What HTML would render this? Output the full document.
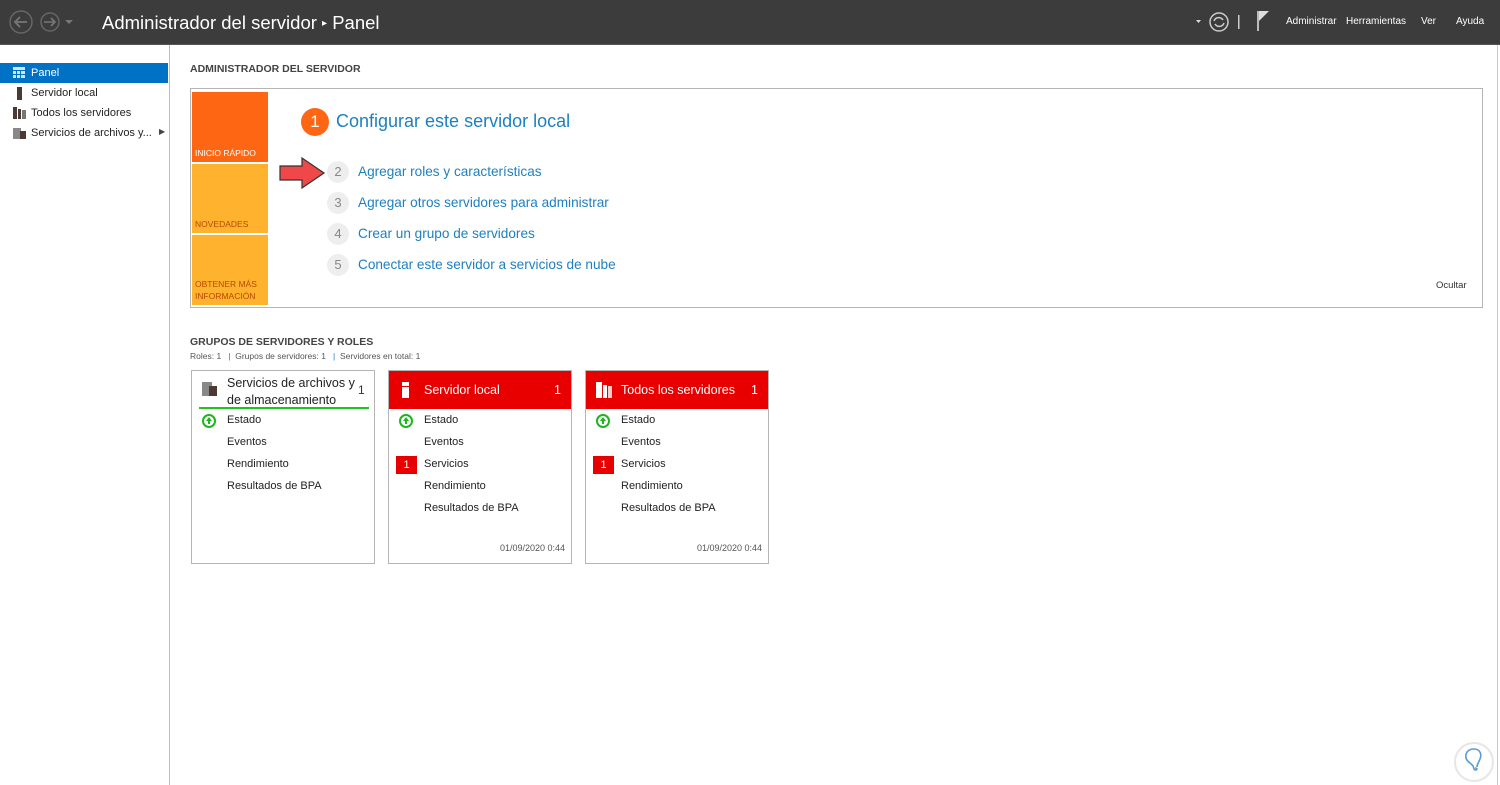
<!DOCTYPE html>
<html><head><meta charset="utf-8"><style>
*{margin:0;padding:0;box-sizing:border-box}
body{width:1500px;height:785px;overflow:hidden;background:#fff;font-family:"Segoe UI","Liberation Sans",sans-serif;position:relative;color:#333}
.abs{position:absolute}
#hdr{left:0;top:0;width:1500px;height:45px;background:#3c3c3c;border-bottom:1px solid #555}
#side{left:0;top:45px;width:170px;height:740px;border-right:1px solid #bdbdbd;background:#fff}
.nav{position:absolute;left:0;width:168px;height:20px;font-size:11px;line-height:20px;padding-left:31px;color:#222}
.sel{background:#0072c6;color:#fff}
.ico{position:absolute;left:13px;top:4px}
.menu{color:#fff;font-size:10px;top:16px}
.tile{position:absolute;left:192px;width:76px;font-size:8.5px;padding:0 0 3px 3px;display:flex;align-items:flex-end;line-height:12px}
.step{position:absolute;left:327px;font-size:13.6px;color:#1e80c0}
.step span{display:inline-block;width:22px;height:22px;border-radius:50%;background:#eee;color:#888;text-align:center;line-height:22px;margin-right:9px;font-size:13px}
.card{position:absolute;top:370px;width:184px;height:194px;border:1px solid #b5b5b5;background:#fff}
.ch{height:38px;background:#e80000;color:#fff;font-size:12.5px;line-height:38px;padding-left:35px;position:relative}
.row{position:absolute;left:35px;font-size:11px;color:#222}
.badge{position:absolute;left:7px;width:21px;height:18px;background:#e80000;color:#fff;font-size:11px;text-align:center;line-height:18px}
.up{position:absolute;left:10px;width:14px;height:14px;border:2px solid #1fb51f;border-radius:50%}
.up:after{content:"";position:absolute;left:2px;top:1px;border-left:3px solid transparent;border-right:3px solid transparent;border-bottom:4px solid #1fb51f}
.up:before{content:"";position:absolute;left:4px;top:4px;width:2px;height:4px;background:#1fb51f}
.date{position:absolute;right:6px;top:172px;font-size:9px;color:#555}
</style></head><body>
<div id="hdr" class="abs">
 <svg class="abs" style="left:8px;top:8px" width="70" height="28"><circle cx="13" cy="14" r="11" fill="none" stroke="#666" stroke-width="1.5"/><path d="M19 14H7M12 9l-5 5 5 5" stroke="#777" stroke-width="1.8" fill="none"/><circle cx="42" cy="14" r="9" fill="none" stroke="#666" stroke-width="1.5"/><path d="M36 14h11M43 10l4 4-4 4" stroke="#777" stroke-width="1.6" fill="none"/><path d="M57 12h8l-4 4z" fill="#777"/></svg>
 <div class="abs" style="left:102px;top:12px;color:#fff;font-size:18.5px">Administrador del servidor <span style="font-size:10px;vertical-align:3px">▸</span> Panel</div>
 <svg class="abs" style="left:1193px;top:10px" width="80" height="25"><path d="M3 10h5l-2.5 3z" fill="#ddd"/><circle cx="26" cy="12" r="9" fill="none" stroke="#ccc" stroke-width="1.5"/><path d="M21 11a5 5 0 0 1 9-1M31 13a5 5 0 0 1-9 1" stroke="#ccc" stroke-width="1.5" fill="none"/><rect x="45" y="5" width="1.5" height="14" fill="#ccc"/><rect x="64" y="1" width="2" height="20" fill="#bbb"/><path d="M66 1l10 0-10 10z" fill="#ddd"/></svg>
 <div class="abs menu" style="left:1286px">Administrar</div>
 <div class="abs menu" style="left:1346px">Herramientas</div>
 <div class="abs menu" style="left:1421px">Ver</div>
 <div class="abs menu" style="left:1456px">Ayuda</div>
</div>
<div id="side" class="abs">
 <div class="nav sel" style="top:18px"><svg class="ico" width="12" height="11"><g fill="#cfe6f8"><rect x="0" y="0" width="12" height="3"/><rect x="0" y="4" width="3" height="3"/><rect x="4" y="4" width="3" height="3"/><rect x="8" y="4" width="4" height="3"/><rect x="0" y="8" width="3" height="3"/><rect x="4" y="8" width="3" height="3"/><rect x="8" y="8" width="4" height="3"/></g></svg>Panel</div>
 <div class="nav" style="top:38px"><svg class="ico" width="12" height="13"><rect x="4" y="0" width="5" height="13" fill="#4a3a33"/></svg>Servidor local</div>
 <div class="nav" style="top:58px"><svg class="ico" width="13" height="12"><rect x="0" y="0" width="4" height="12" fill="#4a3a33"/><rect x="5" y="2" width="3" height="10" fill="#4a3a33"/><rect x="9" y="3" width="4" height="9" fill="#777"/></svg>Todos los servidores</div>
 <div class="nav" style="top:78px"><svg class="ico" width="14" height="12"><rect x="0" y="1" width="8" height="11" fill="#888"/><rect x="7" y="4" width="6" height="8" fill="#4a3a33"/></svg>Servicios de archivos y...</div>
 <div class="abs" style="left:159px;top:82px;font-size:8px;color:#444">▶</div>
</div>
<div class="abs" style="left:1497px;top:45px;width:1px;height:740px;background:#ccc"></div>
<div class="abs" style="left:190px;top:63px;font-size:10.5px;font-weight:bold;color:#444">ADMINISTRADOR DEL SERVIDOR</div>
<div class="abs" style="left:190px;top:88px;width:1293px;height:220px;border:1px solid #b5b5b5"></div>
<div class="tile" style="top:92px;height:70px;background:#ff6614;color:#fff">INICIO RÁPIDO</div>
<div class="tile" style="top:164px;height:69px;background:#ffb22e;color:#b54a00">NOVEDADES</div>
<div class="tile" style="top:235px;height:70px;background:#ffb22e;color:#b54a00">OBTENER MÁS INFORMACIÓN</div>
<div class="abs" style="left:301px;top:108px;width:28px;height:28px;border-radius:50%;background:#ff6614;color:#fff;font-size:17px;text-align:center;line-height:28px">1</div>
<div class="abs" style="left:336px;top:111px;font-size:18px;color:#1e80c0">Configurar este servidor local</div>
<svg class="abs" style="left:278px;top:156px" width="50" height="34"><path d="M2 10h22V2l22 15-22 15v-8H2z" fill="#f04848" stroke="#333" stroke-width="1.2"/></svg>
<div class="step" style="top:161px"><span>2</span>Agregar roles y características</div>
<div class="step" style="top:192px"><span>3</span>Agregar otros servidores para administrar</div>
<div class="step" style="top:223px"><span>4</span>Crear un grupo de servidores</div>
<div class="step" style="top:254px"><span>5</span>Conectar este servidor a servicios de nube</div>
<div class="abs" style="left:1436px;top:280px;font-size:9.5px;color:#333">Ocultar</div>
<div class="abs" style="left:190px;top:336px;font-size:10.5px;font-weight:bold;color:#444">GRUPOS DE SERVIDORES Y ROLES</div>
<div class="abs" style="left:190px;top:351px;font-size:8.5px;color:#555">Roles: 1 &nbsp; <span style="color:#1e80c0">|</span> &nbsp;Grupos de servidores: 1 &nbsp; <span style="color:#1e80c0">|</span> &nbsp;Servidores en total: 1</div>

<div class="card" style="left:191px">
 <svg class="abs" style="left:10px;top:10px" width="16" height="16"><rect x="0" y="1" width="10" height="14" fill="#888"/><rect x="7" y="5" width="8" height="10" fill="#4a3a33"/></svg>
 <div class="abs" style="left:35px;top:4px;font-size:12.5px;line-height:17px;color:#222">Servicios de archivos y<br>de almacenamiento</div>
 <div class="abs" style="left:166px;top:12px;font-size:12px">1</div>
 <div class="abs" style="left:7px;top:36px;width:170px;height:2px;background:#1fc41f"></div>
 <div class="up" style="top:43px"></div><div class="row" style="top:43px">Estado</div>
 <div class="row" style="top:65px">Eventos</div>
 <div class="row" style="top:87px">Rendimiento</div>
 <div class="row" style="top:109px">Resultados de BPA</div>
</div>
<div class="card" style="left:388px">
 <div class="ch"><svg class="abs" style="left:12px;top:11px" width="10" height="16"><rect x="1" y="0" width="7" height="16" fill="#fff"/><rect x="1" y="4" width="7" height="1" fill="#e80000"/></svg>Servidor local<span class="abs" style="right:10px">1</span></div>
 <div class="up" style="top:43px"></div><div class="row" style="top:43px">Estado</div>
 <div class="row" style="top:65px">Eventos</div>
 <div class="badge" style="top:85px">1</div><div class="row" style="top:87px">Servicios</div>
 <div class="row" style="top:109px">Rendimiento</div>
 <div class="row" style="top:131px">Resultados de BPA</div>
 <div class="date">01/09/2020 0:44</div>
</div>
<div class="card" style="left:585px">
 <div class="ch"><svg class="abs" style="left:10px;top:11px" width="16" height="16"><rect x="0" y="0" width="6" height="16" fill="#fff"/><rect x="7" y="3" width="4" height="13" fill="#fff"/><rect x="12" y="4" width="4" height="12" fill="#fcc"/></svg>Todos los servidores<span class="abs" style="right:10px">1</span></div>
 <div class="up" style="top:43px"></div><div class="row" style="top:43px">Estado</div>
 <div class="row" style="top:65px">Eventos</div>
 <div class="badge" style="top:85px">1</div><div class="row" style="top:87px">Servicios</div>
 <div class="row" style="top:109px">Rendimiento</div>
 <div class="row" style="top:131px">Resultados de BPA</div>
 <div class="date">01/09/2020 0:44</div>
</div>
<svg class="abs" style="left:1453px;top:741px" width="42" height="42"><circle cx="21" cy="21" r="19" fill="#fff" stroke="#e6e6e6" stroke-width="2"/><path d="M21 8c-6 0-9 4-8 9 1 4 5 5 7 8 1 1 0 3 2 4 3 0 2-2 0-2M21 8c6 0 8 5 6 10-1 3-3 5-3 8" fill="none" stroke="#5b9bd5" stroke-width="1.6"/></svg>
</body></html>
